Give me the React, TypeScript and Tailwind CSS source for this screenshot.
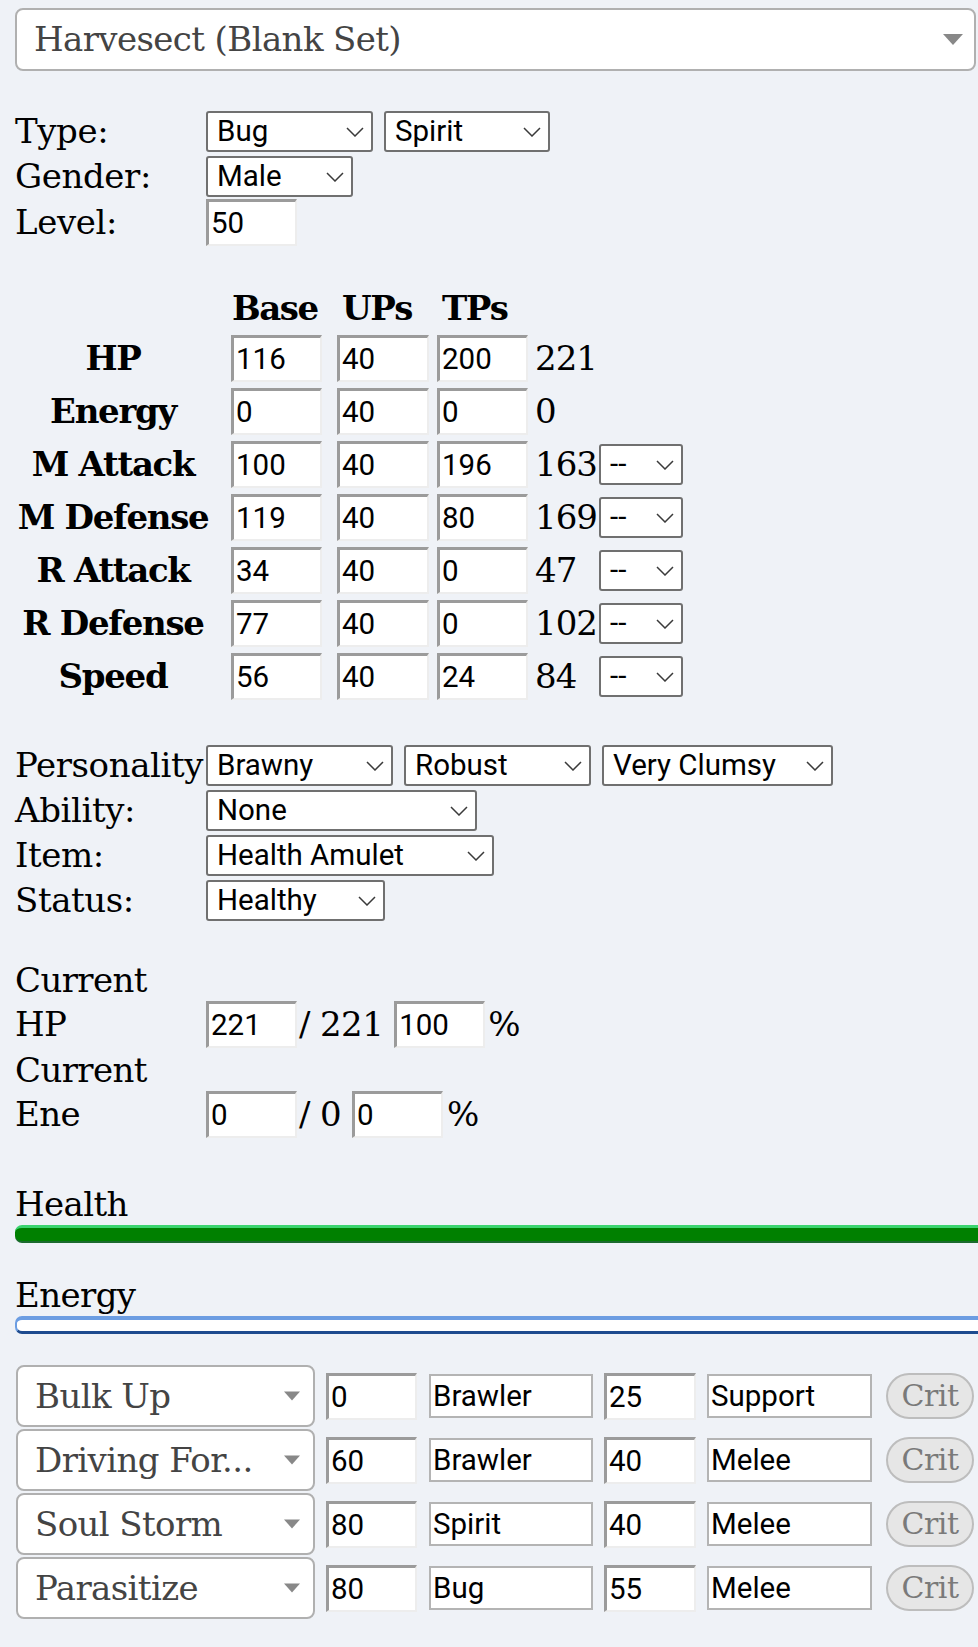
import React from 'react';

const serif = "font-['DejaVu_Serif',serif]";
const sans = "font-['Roboto',sans-serif]";

function Chevron() {
  return (
    <svg width="18" height="10" viewBox="0 0 18 10" className="shrink-0">
      <path d="M1 1 L9 9 L17 1" fill="none" stroke="#3a3a3a" strokeWidth="1.5" />
    </svg>
  );
}

function Select({ value, className }: { value: string; className: string }) {
  return (
    <div
      className={`flex h-[41px] shrink-0 items-center justify-between rounded-[3px] border-2 border-[#707070] bg-white pl-[9px] pr-[7px] ${sans} text-[29.5px] tracking-normal text-black ${className}`}
    >
      <span className="whitespace-nowrap leading-none">{value}</span>
      <Chevron />
    </div>
  );
}

function NumInput({ value, className = '' }: { value: string; className?: string }) {
  return (
    <input
      readOnly
      value={value}
      className={`h-[47px] w-[91px] shrink-0 border-t-[3px] border-l-[3px] border-r-2 border-b-2 border-t-[#9b9b9b] border-l-[#9b9b9b] border-r-[#ededed] border-b-[#ededed] bg-white pl-[2px] ${sans} text-[29.5px] tracking-normal text-black outline-none ${className}`}
    />
  );
}

function TextBox({ value, className = '' }: { value: string; className?: string }) {
  return (
    <input
      readOnly
      value={value}
      className={`h-[44px] shrink-0 border-2 border-[#b4b4b4] bg-white pl-[2px] ${sans} text-[29.5px] tracking-normal text-black outline-none ${className}`}
    />
  );
}

function BigSelect({ value, className, arrow }: { value: string; className: string; arrow: string }) {
  return (
    <div
      className={`flex shrink-0 items-center justify-between rounded-[8px] border-2 border-[#b0b0b0] bg-white pl-[17px] ${serif} text-[34px] tracking-[-0.6px] text-[#444] ${className}`}
    >
      <span className="whitespace-nowrap">{value}</span>
      <svg width="20" height="11" viewBox="0 0 20 11" className={arrow}>
        <path d="M0 0 H20 L10 11 Z" fill="#888" />
      </svg>
    </div>
  );
}

const stats = [
  { name: 'HP', base: '116', ups: '40', tps: '200', total: '221', nature: false },
  { name: 'Energy', base: '0', ups: '40', tps: '0', total: '0', nature: false },
  { name: 'M Attack', base: '100', ups: '40', tps: '196', total: '163', nature: true },
  { name: 'M Defense', base: '119', ups: '40', tps: '80', total: '169', nature: true },
  { name: 'R Attack', base: '34', ups: '40', tps: '0', total: '47', nature: true },
  { name: 'R Defense', base: '77', ups: '40', tps: '0', total: '102', nature: true },
  { name: 'Speed', base: '56', ups: '40', tps: '24', total: '84', nature: true },
];

const moves = [
  { name: 'Bulk Up', power: '0', type: 'Brawler', acc: '25', cat: 'Support' },
  { name: 'Driving For...', power: '60', type: 'Brawler', acc: '40', cat: 'Melee' },
  { name: 'Soul Storm', power: '80', type: 'Spirit', acc: '40', cat: 'Melee' },
  { name: 'Parasitize', power: '80', type: 'Bug', acc: '55', cat: 'Melee' },
];

export default function App() {
  return (
    <div className={`min-h-[1647px] w-full overflow-hidden bg-[#eff2f7] pl-[15px] pt-[8px] text-black ${serif}`}>
      <BigSelect value="Harvesect (Blank Set)" className="h-[63px] w-[961px]" arrow="mr-[11px]" />

      {/* basics */}
      <div className="mt-[40px] flex flex-col text-[34px] leading-[41px] tracking-[-0.4px]">
        <div className="flex h-[41px] items-center">
          <div className="w-[191px]">Type:</div>
          <Select value="Bug" className="w-[167px]" />
          <Select value="Spirit" className="ml-[11px] w-[166px]" />
        </div>
        <div className="mt-[4px] flex h-[41px] items-center">
          <div className="w-[191px]">Gender:</div>
          <Select value="Male" className="w-[147px]" />
        </div>
        <div className="mt-[2px] flex h-[47px] items-center">
          <div className="w-[191px]">Level:</div>
          <NumInput value="50" />
        </div>
      </div>

      {/* stats */}
      <div className="mt-[42px] flex h-[41px] items-center text-[34px] font-bold leading-[41px] tracking-[-1.5px]">
        <div className="w-[196px]" />
        <div className="ml-[20px] w-[91px] pl-[1px]">Base</div>
        <div className="ml-[15px] w-[92px] pl-[5px]">UPs</div>
        <div className="ml-[8px] w-[91px] pl-[5px]">TPs</div>
      </div>
      <div className="mt-[6px] flex flex-col gap-[6px]">
        {stats.map((s) => (
          <div key={s.name} className="flex h-[47px] items-center">
            <div className="w-[196px] whitespace-nowrap text-center text-[34px] font-bold leading-[41px] tracking-[-1.3px]">{s.name}</div>
            <NumInput value={s.base} className="ml-[20px]" />
            <NumInput value={s.ups} className="ml-[15px] w-[92px]" />
            <NumInput value={s.tps} className="ml-[8px]" />
            <div className="ml-[7px] w-[64px] text-[34px] leading-[41px] tracking-[-1px]">{s.total}</div>
            {s.nature && <Select value="--" className="w-[84px]" />}
          </div>
        ))}
      </div>

      {/* personality etc */}
      <div className="mt-[45px] flex flex-col text-[34px] leading-[41px] tracking-[-0.4px]">
        <div className="flex h-[41px] items-center">
          <div className="w-[191px] whitespace-nowrap">Personality</div>
          <Select value="Brawny" className="w-[187px]" />
          <Select value="Robust" className="ml-[11px] w-[187px]" />
          <Select value="Very Clumsy" className="ml-[11px] w-[231px]" />
        </div>
        <div className="mt-[4px] flex h-[41px] items-center">
          <div className="w-[191px]">Ability:</div>
          <Select value="None" className="w-[271px]" />
        </div>
        <div className="mt-[4px] flex h-[41px] items-center">
          <div className="w-[191px]">Item:</div>
          <Select value="Health Amulet" className="w-[288px]" />
        </div>
        <div className="mt-[4px] flex h-[41px] items-center">
          <div className="w-[191px]">Status:</div>
          <Select value="Healthy" className="w-[179px]" />
        </div>
      </div>

      {/* current hp / energy */}
      <div className="mt-[39px] flex flex-col text-[34px] leading-[41px] tracking-[-0.6px]">
        <div>Current</div>
        <div className="flex h-[47px] items-center">
          <div className="w-[191px]">HP</div>
          <NumInput value="221" />
          <span className="ml-[2px] whitespace-nowrap">/ 221</span>
          <NumInput value="100" className="ml-[11px]" />
          <span className="ml-[3px]">%</span>
        </div>
        <div className="mt-[2px]">Current</div>
        <div className="flex h-[47px] items-center">
          <div className="w-[191px]">Ene</div>
          <NumInput value="0" />
          <span className="ml-[2px] whitespace-nowrap">/ 0</span>
          <NumInput value="0" className="ml-[11px]" />
          <span className="ml-[4px]">%</span>
        </div>
      </div>

      {/* bars */}
      <div className="mt-[46px] text-[34px] leading-[41px] tracking-[-0.6px]">Health</div>
      <div className="h-[18px] w-[990px] rounded-l-[7px] border-t-[3px] border-b-[2px] border-t-[#3bd46f] border-b-[#1b6b2f] bg-[#008000]" />
      <div className="mt-[32px] text-[34px] leading-[41px] tracking-[-0.6px]">Energy</div>
      <div className="h-[18px] w-[990px] rounded-l-[7px] border-t-[4px] border-b-[3px] border-l-2 border-t-[#6c9de2] border-b-[#1e4b8f] border-l-[#6c9de2] bg-white" />

      {/* moves */}
      <div className="mt-[31px] flex flex-col gap-[2px] pl-[1px]">
        {moves.map((m) => (
          <div key={m.name} className="flex h-[62px] items-center">
            <BigSelect value={m.name} className="h-[62px] w-[299px]" arrow="mr-[13px] h-[10px] w-[16px]" />
            <NumInput value={m.power} className="ml-[11px]" />
            <TextBox value={m.type} className="ml-[12px] w-[164px]" />
            <NumInput value={m.acc} className="ml-[11px] w-[92px]" />
            <TextBox value={m.cat} className="ml-[11px] w-[165px]" />
            <button className={`ml-[14px] h-[46px] w-[88px] rounded-full border-2 border-[#bdbdbd] bg-[#e6e6e6] ${serif} text-[30px] leading-none tracking-[-0.5px] text-[#7a7a7a]`}>
              Crit
            </button>
          </div>
        ))}
      </div>
    </div>
  );
}
